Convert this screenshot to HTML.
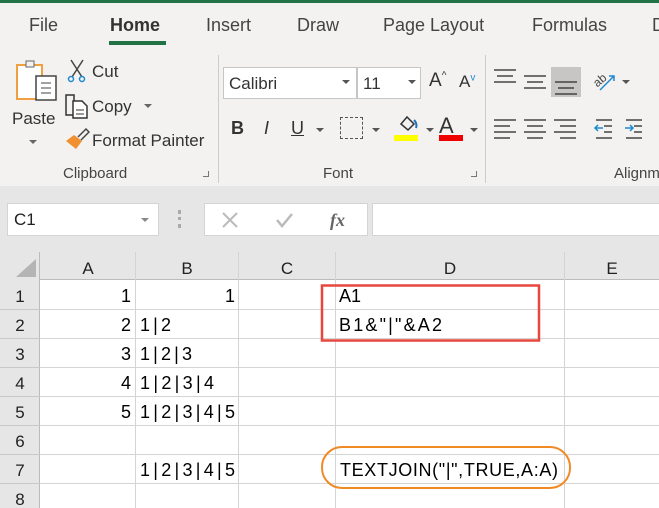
<!DOCTYPE html>
<html><head><style>
*{margin:0;padding:0;box-sizing:border-box}
body{width:659px;height:508px;overflow:hidden;background:#fff;font-family:"Liberation Sans",sans-serif;position:relative;color:#222}
.a{position:absolute}
.rib{left:0;top:0;width:659px;height:186px;background:#f3f2f1}
.tab{top:15px;font-size:18px;color:#444}
.t{font-size:17px;color:#333}
</style></head><body>
<div class="a rib"></div>
<div class="a" style="left:0;top:0;width:659px;height:3px;background:#217346"></div>
<div class="a tab" style="left:29px">File</div>
<div class="a tab" style="left:110px;font-weight:bold;color:#333">Home</div>
<div class="a" style="left:109px;top:41px;width:57px;height:4px;background:#217346"></div>
<div class="a tab" style="left:206px">Insert</div>
<div class="a tab" style="left:297px">Draw</div>
<div class="a tab" style="left:383px">Page Layout</div>
<div class="a tab" style="left:532px">Formulas</div>
<div class="a tab" style="left:652px">D</div>
<!-- clipboard -->
<svg class="a" style="left:14px;top:58px" width="46" height="46"><rect x="3" y="7" width="25" height="34" fill="#fff" stroke="#f0a040" stroke-width="2"/><rect x="12" y="3" width="8" height="6" fill="#f3f2f1" stroke="#666"/><rect x="22" y="18" width="20" height="24" fill="#fff" stroke="#444" stroke-width="1.5"/><path d="M27 25h10M27 30h10M27 35h10" stroke="#444"/></svg>
<div class="a t" style="left:12px;top:109px">Paste</div>
<div class="a" style="left:29px;top:140px;border:4px solid transparent;border-top-color:#666"></div>
<svg class="a" style="left:66px;top:58px" width="22" height="26"><path d="M5 2l11 17M17 2L6 19" stroke="#444" stroke-width="1.5"/><circle cx="5" cy="21" r="2.5" fill="none" stroke="#1e88d0" stroke-width="1.5"/><circle cx="16" cy="21" r="2.5" fill="none" stroke="#1e88d0" stroke-width="1.5"/></svg>
<div class="a t" style="left:92px;top:62px">Cut</div>
<svg class="a" style="left:64px;top:93px" width="26" height="26"><path d="M2 2h8v20H2z" fill="none" stroke="#333" stroke-width="1.5"/><path d="M9 8h9l5 5v12H9z" fill="#fff" stroke="#333" stroke-width="1.5"/><path d="M12 17h8M12 21h8" stroke="#333"/></svg>
<div class="a t" style="left:92px;top:97px">Copy</div>
<div class="a" style="left:144px;top:104px;border:4px solid transparent;border-top-color:#666"></div>
<svg class="a" style="left:64px;top:127px" width="26" height="24"><path d="M2 14l10 8 6-8-8-6z" fill="#f09030"/><path d="M14 10l8-8 3 3-8 8" fill="none" stroke="#444" stroke-width="1.5"/></svg>
<div class="a t" style="left:92px;top:131px">Format Painter</div>
<div class="a" style="left:63px;top:165px;font-size:15px;color:#444">Clipboard</div>
<div class="a" style="left:218px;top:55px;width:1px;height:128px;background:#ccc"></div>
<!-- font -->
<div class="a" style="left:223px;top:67px;width:134px;height:32px;background:#fff;border:1px solid #c6c6c6"></div>
<div class="a" style="left:229px;top:74px;font-size:17px;color:#333">Calibri</div>
<div class="a" style="left:342px;top:80px;border:4px solid transparent;border-top-color:#555"></div>
<div class="a" style="left:357px;top:67px;width:64px;height:32px;background:#fff;border:1px solid #c6c6c6"></div>
<div class="a" style="left:363px;top:74px;font-size:17px;color:#333">11</div>
<div class="a" style="left:408px;top:80px;border:4px solid transparent;border-top-color:#555"></div>
<div class="a" style="left:429px;top:70px;font-size:19px;color:#333">A<sup style="font-size:10px">^</sup></div>
<div class="a" style="left:459px;top:72px;font-size:17px;color:#333">A<sup style="font-size:10px;color:#1e88d0">v</sup></div>
<div class="a" style="left:231px;top:118px;font-size:18px;font-weight:bold;color:#333">B</div>
<div class="a" style="left:264px;top:118px;font-size:18px;font-style:italic;color:#333">I</div>
<div class="a" style="left:291px;top:118px;font-size:18px;text-decoration:underline;color:#333">U</div>
<div class="a" style="left:316px;top:128px;border:4px solid transparent;border-top-color:#555"></div>
<div class="a" style="left:340px;top:117px;width:23px;height:22px;border:1px dashed #555"></div>
<div class="a" style="left:372px;top:128px;border:4px solid transparent;border-top-color:#555"></div>
<div class="a" style="left:394px;top:135px;width:24px;height:6px;background:#ffff00"></div>
<svg class="a" style="left:397px;top:114px" width="22" height="20"><path d="M4 10l6-7 7 7-6 6z" fill="none" stroke="#333" stroke-width="1.5"/><path d="M17 6c2 2 3 5 2 8" stroke="#1e70c0" stroke-width="2" fill="none"/></svg>
<div class="a" style="left:426px;top:128px;border:4px solid transparent;border-top-color:#555"></div>
<div class="a" style="left:439px;top:113px;font-size:22px;color:#333">A</div>
<div class="a" style="left:439px;top:135px;width:24px;height:6px;background:#e00"></div>
<div class="a" style="left:470px;top:128px;border:4px solid transparent;border-top-color:#555"></div>
<div class="a" style="left:323px;top:165px;font-size:15px;color:#444">Font</div>
<div class="a" style="left:485px;top:55px;width:1px;height:128px;background:#ccc"></div>
<!-- alignment -->
<svg class="a" style="left:492px;top:66px" width="150" height="80">
<g stroke="#444" stroke-width="1.5"><path d="M2 4h22M5 10h16M2 16h22"/><path d="M32 10h22M35 16h16M32 22h22"/></g>
<rect x="59" y="1" width="30" height="30" fill="#c8c6c4"/>
<g stroke="#444" stroke-width="1.5"><path d="M63 16h22M66 22h16M63 28h22"/>
<path d="M2 54h22M2 60h16M2 66h22M2 72h16M32 54h22M35 60h16M32 66h22M35 72h16M62 54h22M68 60h16M62 66h22M68 72h16"/>
<path d="M104 54h16M112 60h8M112 66h8M104 72h16M134 54h16M142 60h8M142 66h8M134 72h16"/></g>
<path d="M111 62h-8m3-3l-3 3 3 3M133 62h8m-3-3l3 3-3 3" stroke="#1e88d0" stroke-width="1.5" fill="none"/>
<path d="M108 24l14-14m-5 0h5v5" stroke="#1e88d0" stroke-width="1.5" fill="none"/>
<text x="101" y="18" font-size="12" fill="#444" transform="rotate(-40 108 14)">ab</text>
</svg>
<div class="a" style="left:622px;top:80px;border:4px solid transparent;border-top-color:#555"></div>
<div class="a" style="left:614px;top:165px;font-size:15px;color:#444">Alignm</div>
<div class="a" style="left:471px;top:171px;width:6px;height:6px;border-right:1px solid #777;border-bottom:1px solid #777"></div>
<div class="a" style="left:203px;top:171px;width:6px;height:6px;border-right:1px solid #777;border-bottom:1px solid #777"></div>
<!-- band -->
<div class="a" style="left:0;top:186px;width:659px;height:66px;background:#e6e6e6"></div>
<div class="a" style="left:7px;top:203px;width:152px;height:33px;background:#fff;border:1px solid #d4d4d4"></div>
<div class="a" style="left:14px;top:210px;font-size:17px;color:#222">C1</div>
<div class="a" style="left:141px;top:218px;border:4px solid transparent;border-top-color:#888"></div>
<div class="a" style="left:178px;top:210px;width:3px;height:18px;border-left:3px dotted #aaa"></div>
<div class="a" style="left:204px;top:203px;width:164px;height:33px;background:#fff;border:1px solid #d4d4d4"></div>
<svg class="a" style="left:220px;top:210px" width="130" height="20"><path d="M3 3l14 14M17 3L3 17" stroke="#bbb" stroke-width="2"/><path d="M57 10l5 6 10-12" stroke="#bbb" stroke-width="2.5" fill="none"/><text x="110" y="16" font-size="18" font-style="italic" font-family="Liberation Serif" font-weight="bold" fill="#666">fx</text></svg>
<div class="a" style="left:372px;top:203px;width:290px;height:33px;background:#fff;border:1px solid #d4d4d4"></div>
<!-- grid -->
<div class="a" style="left:0;top:252px;width:659px;height:28px;background:#e6e6e6;border-bottom:1px solid #bbb"></div>
<div class="a" style="left:0;top:252px;width:40px;height:256px;background:#e6e6e6;border-right:1px solid #bbb"></div>
<svg class="a" style="left:14px;top:257px" width="24" height="22"><path d="M22 2v18H2z" fill="#b4b4b4"/></svg>
<svg class="a" style="left:0;top:252px" width="659" height="256">
<g stroke="#d4d4d4" stroke-width="1">
<path d="M135.5 0v256M238.5 0v256M335.5 0v256M564.5 0v256"/>
<path d="M40 57.5h619M40 86.5h619M40 115.5h619M40 144.5h619M40 173.5h619M40 202.5h619M40 231.5h619"/>
<path d="M0 57.5h40M0 86.5h40M0 115.5h40M0 144.5h40M0 173.5h40M0 202.5h40M0 231.5h40" stroke="#c8c8c8"/>
</g>
<g font-size="17" fill="#222" text-anchor="middle">
<text x="88" y="22">A</text><text x="187" y="22">B</text><text x="287" y="22">C</text><text x="450" y="22">D</text><text x="612" y="22">E</text>
<text x="20" y="50">1</text><text x="20" y="79">2</text><text x="20" y="108">3</text><text x="20" y="137">4</text><text x="20" y="166">5</text><text x="20" y="195">6</text><text x="20" y="224">7</text><text x="20" y="253">8</text>
</g>
<g font-size="18" fill="#000">
<text x="131" y="50" text-anchor="end">1</text><text x="131" y="79" text-anchor="end">2</text><text x="131" y="108" text-anchor="end">3</text><text x="131" y="137" text-anchor="end">4</text><text x="131" y="166" text-anchor="end">5</text>
<text x="235" y="50" text-anchor="end">1</text>
<text x="140" y="79" textLength="31" lengthAdjust="spacing">1|2</text>
<text x="140" y="108" textLength="52" lengthAdjust="spacing">1|2|3</text>
<text x="140" y="137" textLength="74" lengthAdjust="spacing">1|2|3|4</text>
<text x="140" y="166" textLength="95" lengthAdjust="spacing">1|2|3|4|5</text>
<text x="140" y="224" textLength="95" lengthAdjust="spacing">1|2|3|4|5</text>
<text x="339" y="50">A1</text>
<text x="339" y="79" textLength="103" lengthAdjust="spacing">B1&amp;"|"&amp;A2</text>
<text x="340" y="224" textLength="218" lengthAdjust="spacing">TEXTJOIN("|",TRUE,A:A)</text>
</g>
<rect x="322" y="33.5" width="217" height="55" fill="none" stroke="#e8473e" stroke-width="2.5"/>
<rect x="322" y="195" width="248" height="41" rx="20" fill="none" stroke="#f08a24" stroke-width="2"/>
</svg>
</body></html>
